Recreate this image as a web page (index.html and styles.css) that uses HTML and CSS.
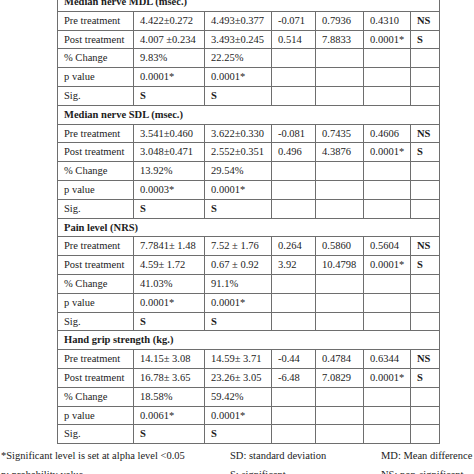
FILE: index.html
```html
<!DOCTYPE html>
<html>
<head>
<meta charset="utf-8">
<link rel="stylesheet" href="styles.css">
</head>
<body>
<div class="page">
<table class="results">
<colgroup>
<col class="c1"><col class="c2"><col class="c3"><col class="c4"><col class="c5"><col class="c6"><col class="c7">
</colgroup>
<tbody>
<tr class="section"><td colspan="7">Median nerve MDL (msec.)</td></tr>
<tr><td>Pre treatment</td><td>4.422±0.272</td><td>4.493±0.377</td><td>-0.071</td><td>0.7936</td><td>0.4310</td><td class="b">NS</td></tr>
<tr><td>Post treatment</td><td>4.007 ±0.234</td><td>3.493±0.245</td><td>0.514</td><td>7.8833</td><td>0.0001*</td><td class="b">S</td></tr>
<tr><td>% Change</td><td>9.83%</td><td>22.25%</td><td></td><td></td><td></td><td></td></tr>
<tr><td>p value</td><td>0.0001*</td><td>0.0001*</td><td></td><td></td><td></td><td></td></tr>
<tr><td>Sig.</td><td class="b">S</td><td class="b">S</td><td></td><td></td><td></td><td></td></tr>

<tr class="section"><td colspan="7">Median nerve SDL (msec.)</td></tr>
<tr><td>Pre treatment</td><td>3.541±0.460</td><td>3.622±0.330</td><td>-0.081</td><td>0.7435</td><td>0.4606</td><td class="b">NS</td></tr>
<tr><td>Post treatment</td><td>3.048±0.471</td><td>2.552±0.351</td><td>0.496</td><td>4.3876</td><td>0.0001*</td><td class="b">S</td></tr>
<tr><td>% Change</td><td>13.92%</td><td>29.54%</td><td></td><td></td><td></td><td></td></tr>
<tr><td>p value</td><td>0.0003*</td><td>0.0001*</td><td></td><td></td><td></td><td></td></tr>
<tr><td>Sig.</td><td class="b">S</td><td class="b">S</td><td></td><td></td><td></td><td></td></tr>

<tr class="section"><td colspan="7">Pain level (NRS)</td></tr>
<tr><td>Pre treatment</td><td>7.7841± 1.48</td><td>7.52 ± 1.76</td><td>0.264</td><td>0.5860</td><td>0.5604</td><td class="b">NS</td></tr>
<tr><td>Post treatment</td><td>4.59± 1.72</td><td>0.67 ± 0.92</td><td>3.92</td><td>10.4798</td><td>0.0001*</td><td class="b">S</td></tr>
<tr><td>% Change</td><td>41.03%</td><td>91.1%</td><td></td><td></td><td></td><td></td></tr>
<tr><td>p value</td><td>0.0001*</td><td>0.0001*</td><td></td><td></td><td></td><td></td></tr>
<tr><td>Sig.</td><td class="b">S</td><td class="b">S</td><td></td><td></td><td></td><td></td></tr>

<tr class="section"><td colspan="7">Hand grip strength (kg.)</td></tr>
<tr><td>Pre treatment</td><td>14.15± 3.08</td><td>14.59± 3.71</td><td>-0.44</td><td>0.4784</td><td>0.6344</td><td class="b">NS</td></tr>
<tr><td>Post treatment</td><td>16.78± 3.65</td><td>23.26± 3.05</td><td>-6.48</td><td>7.0829</td><td>0.0001*</td><td class="b">S</td></tr>
<tr><td>% Change</td><td>18.58%</td><td>59.42%</td><td></td><td></td><td></td><td></td></tr>
<tr><td>p value</td><td>0.0061*</td><td>0.0001*</td><td></td><td></td><td></td><td></td></tr>
<tr><td>Sig.</td><td class="b">S</td><td class="b">S</td><td></td><td></td><td></td><td></td></tr>
</tbody>
</table>
<div class="notes">
<span>*Significant level is set at alpha level &lt;0.05</span>
<span>SD: standard deviation</span>
<span>MD: Mean difference</span>
<span>p: probability value</span>
<span>S: significant</span>
<span>NS: non-significant</span>
</div>
</div>
</body>
</html>
```

FILE: styles.css
```css
html, body {
  margin: 0;
  padding: 0;
  background: #ffffff;
}
body {
  width: 474px;
  height: 474px;
  overflow: hidden;
  font-family: "Liberation Serif", "Times New Roman", serif;
  font-size: 10.5px;
  color: #1c1c1c;
}
.page {
  display: flex;
  flex-direction: column;
}
.results {
  border-collapse: collapse;
  table-layout: fixed;
  width: 382px;
  margin: -8px 0 0 57px;
}
.c1 { width: 76px; }
.c2 { width: 71px; }
.c3 { width: 67px; }
.c4 { width: 44px; }
.c5 { width: 48px; }
.c6 { width: 47px; }
.c7 { width: 29px; }
.results td {
  border: 1px solid #6e6e6e;
  height: 18.8px;
  box-sizing: border-box;
  padding: 2px 0 0 6px;
  line-height: 13px;
  vertical-align: top;
  white-space: nowrap;
  overflow: hidden;
}
.results .section td {
  font-weight: bold;
}
.results td.b {
  font-weight: bold;
}
.notes {
  display: grid;
  grid-template-columns: 229px 151px 1fr;
  padding: 2px 0 0 1px;
  line-height: 19px;
  white-space: nowrap;
  color: #222;
}
```
